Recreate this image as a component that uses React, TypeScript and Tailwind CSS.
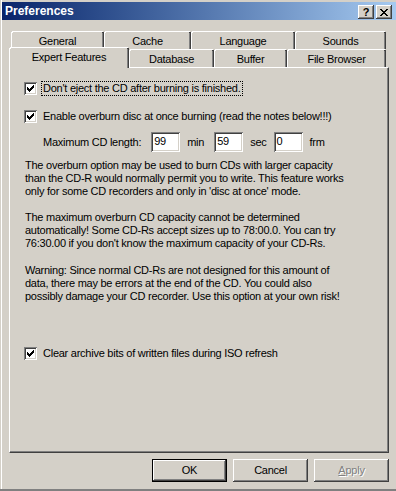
import React from 'react';

const raised =
  'shadow-[inset_-1px_-1px_0_#404040,inset_1px_1px_0_#ffffff,inset_-2px_-2px_0_#808080,inset_2px_2px_0_#d4d0c8]';
const sunken =
  'shadow-[inset_1px_1px_0_#808080,inset_-1px_-1px_0_#ffffff,inset_2px_2px_0_#404040,inset_-2px_-2px_0_#d4d0c8]';

const CHECK = ['......X', '.....XX', 'X...XXX', 'XX.XXX.', 'XXXXX..', '.XXX...', '..X....'];

const CheckBox: React.FC = () => (
  <div className={`w-[13px] h-[13px] shrink-0 bg-white ${sunken} flex items-center justify-center`}>
    <svg width="7" height="7" viewBox="0 0 7 7" shapeRendering="crispEdges">
      {CHECK.map((row, y) =>
        row.split('').map((c, x) => (c === 'X' ? <rect key={`${x}-${y}`} x={x} y={y} width="1" height="1" fill="#000" /> : null))
      )}
    </svg>
  </div>
);

const Tab: React.FC<{ label: string; w: string; selected?: boolean; back?: boolean }> = ({ label, w, selected, back }) => (
  <div
    className={`relative ${w} shrink-0 bg-[#d4d0c8] border-l border-t border-white border-r border-r-[#404040] shadow-[inset_-1px_0_0_#808080] flex justify-center ${
      selected ? 'h-[21px] pt-[3px] z-10' : back ? 'h-[18px] pt-[3px]' : 'h-[18px] mt-[2px] pt-[3px]'
    }`}
  >
    <span className="absolute -left-[1px] -top-[1px] w-[1px] h-[1px] bg-[#d4d0c8]" />
    <span className="absolute left-0 top-0 w-[1px] h-[1px] bg-white" />
    <span className="absolute -right-[1px] -top-[1px] w-[1px] h-[1px] bg-[#d4d0c8]" />
    <span className="absolute right-0 top-0 w-[1px] h-[1px] bg-[#404040]" />
    <span className="leading-[13px]">{label}</span>
  </div>
);

const Field: React.FC<{ value: string }> = ({ value }) => (
  <div className={`w-[29px] h-[20px] bg-white ${sunken} pl-[3px] pt-[3px] leading-[13px]`}>{value}</div>
);

const Button: React.FC<{ children: React.ReactNode; primary?: boolean; disabled?: boolean }> = ({ children, primary, disabled }) => (
  <div
    className={`w-[75px] h-[23px] flex items-center justify-center bg-[#d4d0c8] ${
      primary
        ? 'border border-black shadow-[inset_-1px_-1px_0_#404040,inset_1px_1px_0_#ffffff,inset_-2px_-2px_0_#808080]'
        : raised
    } ${disabled ? 'text-[#808080] [text-shadow:1px_1px_0_#ffffff]' : 'text-black'}`}
  >
    {children}
  </div>
);

export default function App() {
  return (
    <div
      className="w-[396px] h-[491px] bg-[#d4d0c8] overflow-hidden text-[11px] tracking-[-0.25px] text-black"
      style={{ fontFamily: '"Liberation Sans", Arial, sans-serif' }}
    >
      <div className="ml-[1px] h-[489px] border-l border-white flex flex-col">
        {/* title bar */}
        <div className="mt-[2px] h-[18px] flex items-start bg-gradient-to-r from-[#0a246a] to-[#a6caf0] pl-[3px]">
          <span className="text-white font-bold text-[12px] tracking-normal leading-[18px]">Preferences</span>
          <div className="ml-auto mt-[3px] flex gap-[2px] mr-[4px]">
            <div className={`w-[16px] h-[14px] bg-[#d4d0c8] ${raised} flex items-center justify-center font-bold text-[11px] leading-[11px]`}>
              ?
            </div>
            <div className={`w-[16px] h-[14px] bg-[#d4d0c8] ${raised} flex items-center justify-center`}>
              <svg width="8" height="7" viewBox="0 0 8 7" shapeRendering="crispEdges">
                <path d="M0 0h2v1h-2zM6 0h2v1h-2zM1 1h2v1h-2zM5 1h2v1h-2zM2 2h4v1h-4zM3 3h2v1h-2zM2 4h4v1h-4zM1 5h2v1h-2zM5 5h2v1h-2zM0 6h2v1h-2zM6 6h2v1h-2z" fill="#000" />
              </svg>
            </div>
          </div>
        </div>

        {/* tabs */}
        <div className="pt-[11px] pl-[9px] flex">
          <Tab back label="General" w="w-[93px]" />
          <Tab back label="Cache" w="w-[87px]" />
          <Tab back label="Language" w="w-[104px]" />
          <Tab back label="Sounds" w="w-[91px]" />
        </div>
        <div className="-mt-[2px] h-[20px] pl-[7px] flex items-start relative z-10">
          <Tab selected label="Expert Features" w="w-[120px]" />
          <Tab label="Database" w="w-[85px]" />
          <Tab label="Buffer" w="w-[73px]" />
          <Tab label="File Browser" w="w-[99px]" />
        </div>

        {/* panel */}
        <div className="ml-[7px] w-[380px] h-[386px] border-l border-t border-white border-r border-b border-r-[#404040] border-b-[#404040] shadow-[inset_-1px_-1px_0_#808080] flex flex-col pt-[13px] leading-[13px]">
          <div className="h-[15px] flex items-center pl-[14px]">
            <CheckBox />
            <span className="ml-[4px] px-[1px] border border-dotted border-black leading-[13px]">
              Don't eject the CD after burning is finished.
            </span>
          </div>
          <div className="mt-[13px] h-[15px] flex items-center pl-[14px]">
            <CheckBox />
            <span className="ml-[4px] px-[1px] border border-transparent leading-[13px]">
              Enable overburn disc at once burning (read the notes below!!!)
            </span>
          </div>
          <div className="mt-[8px] h-[20px] flex items-center pl-[33px]">
            <span>Maximum CD length:</span>
            <div className="ml-[10px]">
              <Field value="99" />
            </div>
            <span className="ml-[7px]">min</span>
            <div className="ml-[10px]">
              <Field value="59" />
            </div>
            <span className="ml-[7px]">sec</span>
            <div className="ml-[7px]">
              <Field value="0" />
            </div>
            <span className="ml-[7px]">frm</span>
          </div>
          <p className="mt-[7px] pl-[15px] whitespace-nowrap">
            The overburn option may be used to burn CDs with larger capacity
            <br />
            than the CD-R would normally permit you to write. This feature works
            <br />
            only for some CD recorders and only in 'disc at once' mode.
          </p>
          <p className="mt-[13px] pl-[15px] whitespace-nowrap">
            The maximum overburn CD capacity cannot be determined
            <br />
            automatically! Some CD-Rs accept sizes up to 78:00.0. You can try
            <br />
            76:30.00 if you don't know the maximum capacity of your CD-Rs.
          </p>
          <p className="mt-[14px] pl-[15px] whitespace-nowrap">
            Warning: Since normal CD-Rs are not designed for this amount of
            <br />
            data, there may be errors at the end of the CD. You could also
            <br />
            possibly damage your CD recorder. Use this option at your own risk!
          </p>
          <div className="mt-[43px] h-[15px] flex items-center pl-[14px]">
            <CheckBox />
            <span className="ml-[4px] px-[1px] border border-transparent leading-[13px]">
              Clear archive bits of written files during ISO refresh
            </span>
          </div>
        </div>

        {/* buttons */}
        <div className="mt-[6px] flex gap-[6px] pl-[150px]">
          <Button primary>OK</Button>
          <Button>Cancel</Button>
          <Button disabled>
            <span className="underline">A</span>pply
          </Button>
        </div>
      </div>
      <div className="h-[2px] bg-[#808080]" />
    </div>
  );
}
